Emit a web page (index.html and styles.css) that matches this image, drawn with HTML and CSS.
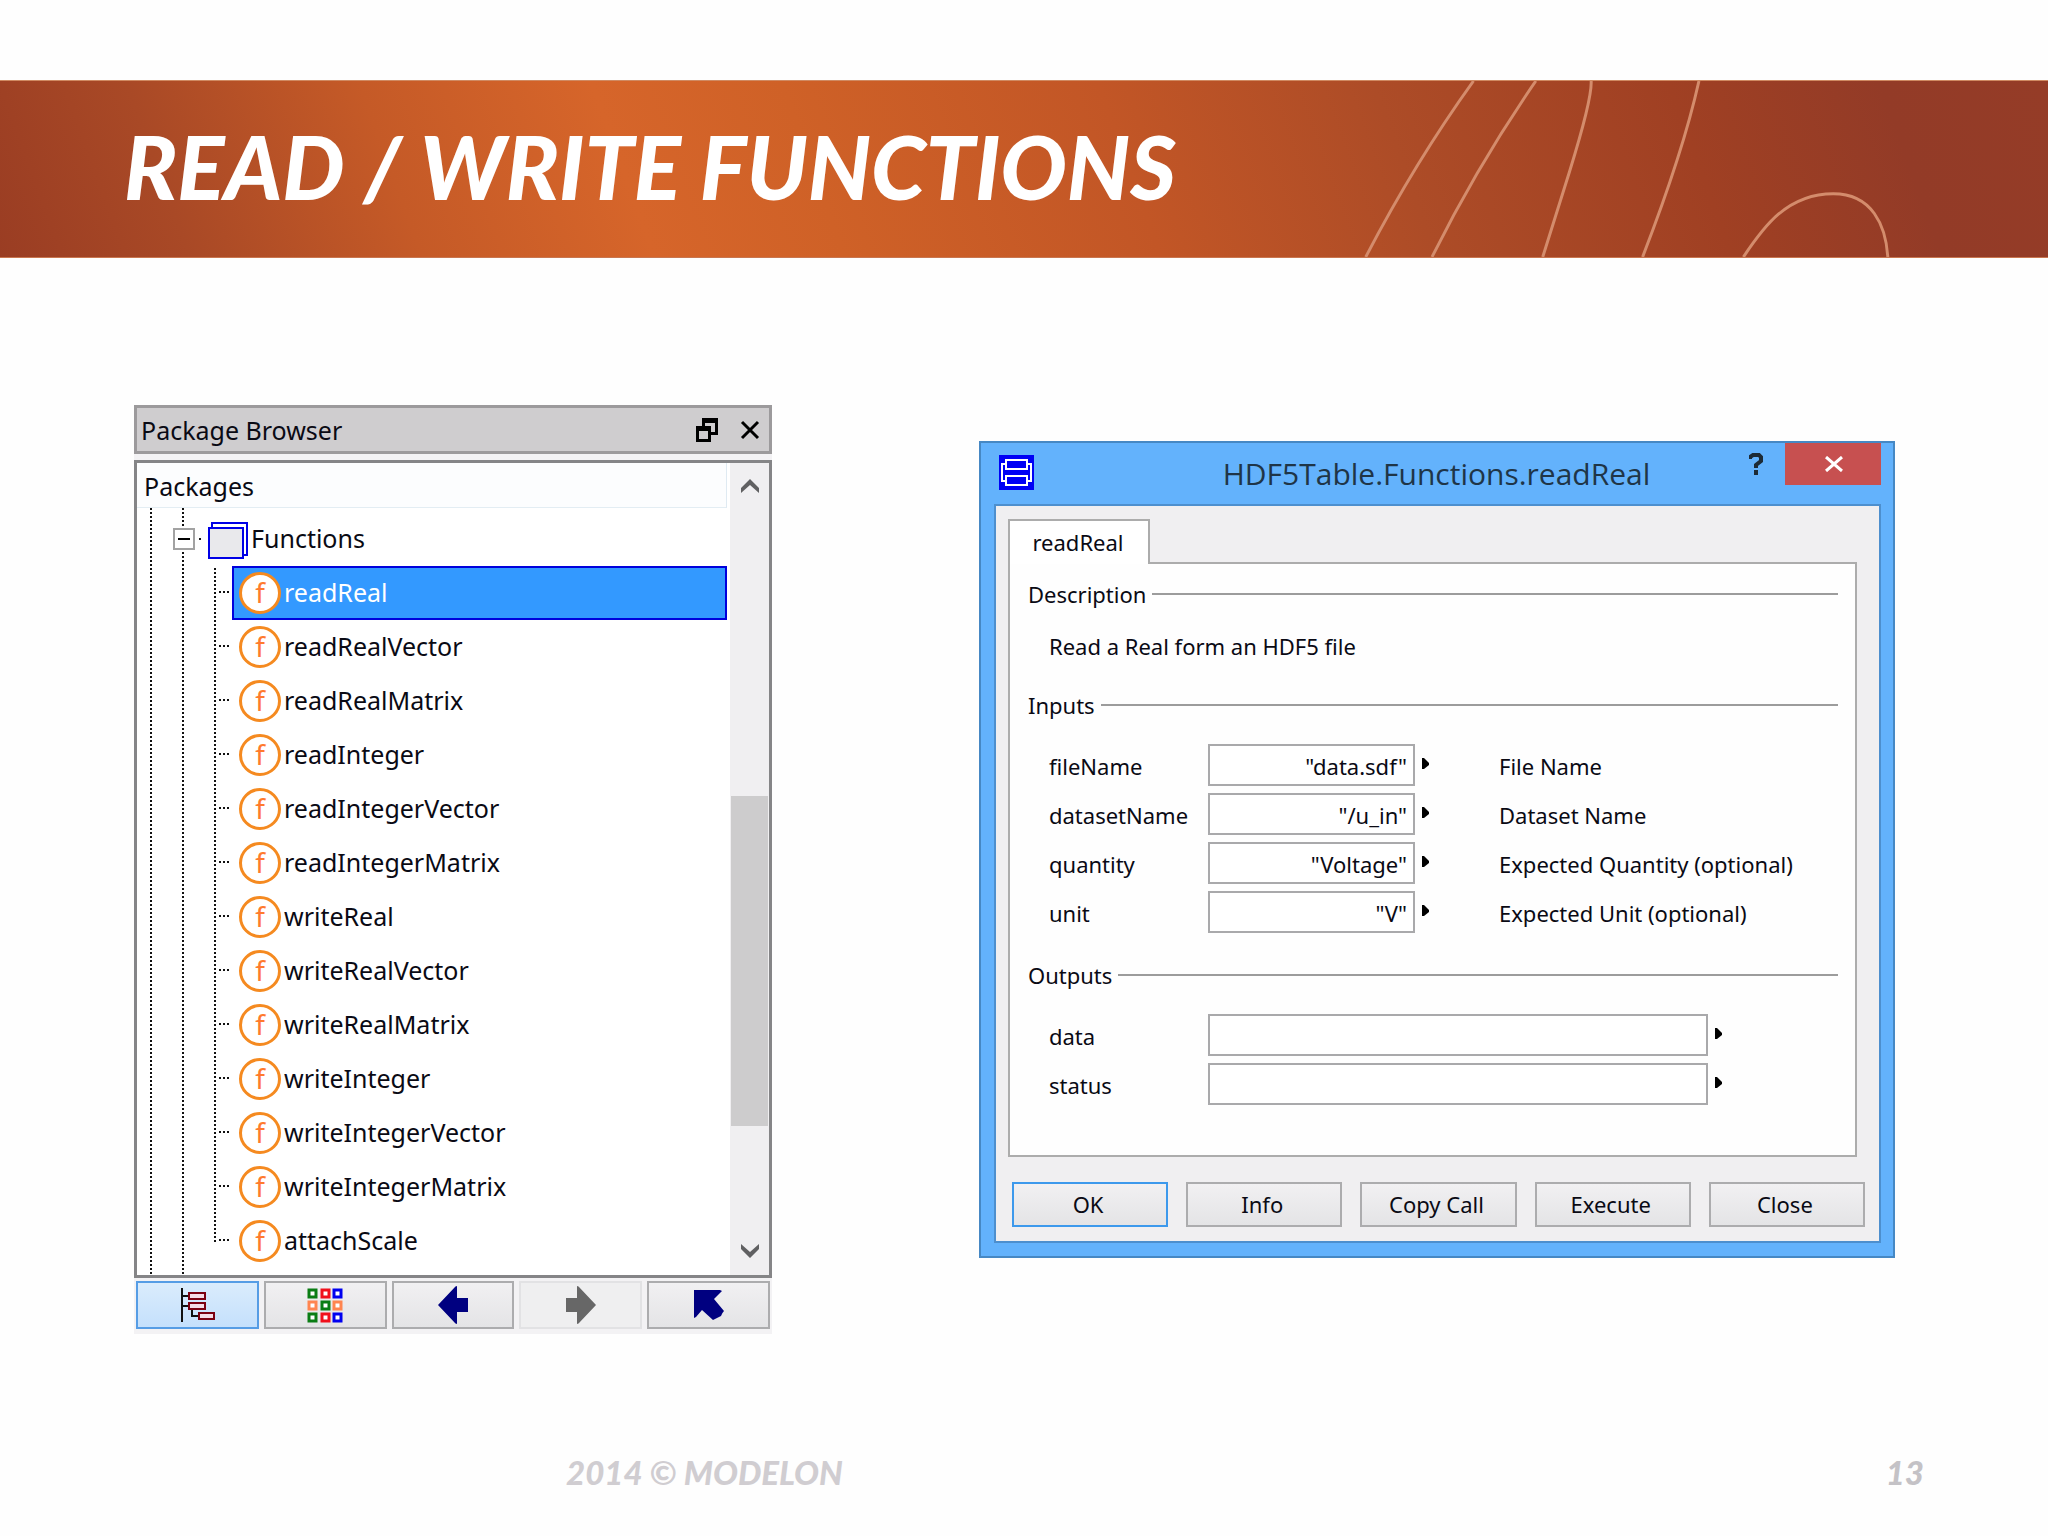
FILE: index.html
```html
<!DOCTYPE html>
<html lang="en">
<head>
<meta charset="utf-8">
<meta name="viewport" content="width=device-width, initial-scale=1">
<title>Read / Write Functions</title>
<link rel="stylesheet" href="styles.css">
</head>
<body>
<svg class="defs" aria-hidden="true">
  <symbol id="more" viewBox="0 0 8 12"><path d="M0 0h2l5 5v2l-5 4H0z"/></symbol>
</svg>
<header class="banner">
  <h1 class="banner-title">READ / WRITE FUNCTIONS</h1>
  <svg class="banner-art" viewBox="0 0 708 178" aria-hidden="true">
    <path d="M131 0 Q72 82 22 178 M194 0 Q136 84 89 178 M250 0 Q251 18 228 92 L201 178 M359 0 Q343 72 302 178 M404 178 C424 148 448 114 495 114 C534 114 548 146 550 178"/>
  </svg>
</header>
<main class="content">
  <section class="browser">
    <div class="browser-head">
      <h2 class="browser-title">Package Browser</h2>
      <button class="glyph" aria-label="Float"><svg width="22" height="24" viewBox="0 0 22 24"><path fill="#000" fill-rule="evenodd" d="M6 0h16v17h-7v7H0V8h6zM9 5v3h6v6h4V5zM3 13v8h9v-8z"/></svg></button>
      <button class="glyph" aria-label="Close panel"><svg width="20" height="20" viewBox="0 0 20 20"><path d="M2 2l16 16M18 2L2 18" stroke="#000" stroke-width="3"/></svg></button>
    </div>
    <div class="tree-box">
      <div class="tree">
        <div class="tree-head">Packages</div>
        <div class="tree-body">
          <div class="folder">
            <button class="toggle" aria-label="Collapse"></button><span class="dot"></span>
            <svg class="folder-icon" width="42" height="38" viewBox="0 0 42 38"><path d="M5 1h35v32h-5V6H5z" fill="#fff" stroke="#0000e6" stroke-width="2"/><path d="M2 6h34v30H2z" fill="#e9e9ec" stroke="#0000e6" stroke-width="2"/></svg>
            <span>Functions</span>
          </div>
          <ul class="leaves">
            <li><button class="leaf selected"><span class="fn">f</span><span>readReal</span></button></li>
            <li><button class="leaf"><span class="fn">f</span><span>readRealVector</span></button></li>
            <li><button class="leaf"><span class="fn">f</span><span>readRealMatrix</span></button></li>
            <li><button class="leaf"><span class="fn">f</span><span>readInteger</span></button></li>
            <li><button class="leaf"><span class="fn">f</span><span>readIntegerVector</span></button></li>
            <li><button class="leaf"><span class="fn">f</span><span>readIntegerMatrix</span></button></li>
            <li><button class="leaf"><span class="fn">f</span><span>writeReal</span></button></li>
            <li><button class="leaf"><span class="fn">f</span><span>writeRealVector</span></button></li>
            <li><button class="leaf"><span class="fn">f</span><span>writeRealMatrix</span></button></li>
            <li><button class="leaf"><span class="fn">f</span><span>writeInteger</span></button></li>
            <li><button class="leaf"><span class="fn">f</span><span>writeIntegerVector</span></button></li>
            <li><button class="leaf"><span class="fn">f</span><span>writeIntegerMatrix</span></button></li>
            <li><button class="leaf"><span class="fn">f</span><span>attachScale</span></button></li>
          </ul>
        </div>
      </div>
      <div class="scroll">
        <button class="scroll-end" aria-label="Scroll up"><svg width="18" height="14" viewBox="0 0 18 14"><path d="M0 9l9-9 9 9v5L9 6l-9 8z" fill="#606062"/></svg></button>
        <div class="thumb"></div>
        <button class="scroll-end" aria-label="Scroll down"><svg width="18" height="14" viewBox="0 0 18 14"><path d="M0 5l9 9 9-9V0L9 8 0 0z" fill="#606062"/></svg></button>
      </div>
    </div>
    <div class="tools">
      <button class="tool active" aria-label="Tree view"><svg width="36" height="36" viewBox="0 0 36 36"><g fill="none" stroke="#111" stroke-width="2"><path d="M3 1v34M3 9h7M3 19h7M13 22v7h7"/></g><g fill="#f5dbe5" stroke="#7b0010" stroke-width="2"><path d="M10 6h16v6H10zM10 16h16v6H10zM20 26h15v6H20z"/></g></svg></button>
      <button class="tool" aria-label="Icon view"><svg width="36" height="36" viewBox="0 0 36 36"><g fill="#fff" stroke-width="3"><path stroke="#0a7d14" d="M2 3h7v7H2zM15 15h7v7h-7zM2 27h7v7H2z"/><path stroke="#f0101c" d="M15 3h7v7h-7zM15 27h7v7h-7z"/><path stroke="#0000f0" d="M27 3h7v7h-7zM27 27h7v7h-7z"/><path stroke="#ff8550" d="M2 15h7v7H2zM27 15h7v7h-7z"/></g></svg></button>
      <button class="tool" aria-label="Back"><svg width="30" height="38" viewBox="0 0 30 38"><path fill="#000080" d="M0 19L17 1q2-2 2 0v11h11v14H19v11q0 2-2 0z"/></svg></button>
      <button class="tool disabled" aria-label="Forward" disabled><svg width="30" height="38" viewBox="0 0 30 38"><path fill="#676767" d="M30 19L13 1q-2-2-2 0v11H0v14h11v11q0 2 2 0z"/></svg></button>
      <button class="tool" aria-label="Up"><svg width="30" height="30" viewBox="0 0 30 30"><path fill="#000080" d="M0 0h26l2 1-8 8 10 12q-2 2-3 5l-8 4-11-10-6 7-2 1z"/></svg></button>
    </div>
  </section>

  <section class="dialog">
    <div class="dialog-head">
      <svg class="app-icon" width="35" height="35" viewBox="0 0 35 35"><path fill="#0000f5" d="M0 0h35v35H0z"/><path fill="none" stroke="#fff" stroke-width="2" d="M7 5h21v9H7zM7 21h21v9H7zM7 9H3v17h4M28 9h4v17h-4"/></svg>
      <h2 class="dialog-title">HDF5Table.Functions.readReal</h2>
      <button class="help" aria-label="Help"><svg width="14" height="22" viewBox="0 0 14 22"><path d="M1 6V4l3-2h6l2 2v4l-5 4v3M7 17v5" fill="none" stroke="#1d2b36" stroke-width="4"/></svg></button>
      <button class="shut" aria-label="Close window"><svg width="18" height="16" viewBox="0 0 18 16"><path d="M1 1l16 14M17 1L1 15" stroke="#fff" stroke-width="3"/></svg></button>
    </div>
    <div class="dialog-body">
      <div class="tabs"><button class="tab">readReal</button></div>
      <div class="pane">
        <h3 class="group">Description</h3>
        <p class="about">Read a Real form an HDF5 file</p>
        <h3 class="group">Inputs</h3>
        <div class="fields">
          <div class="field"><label for="fileName">fileName</label><input id="fileName" value='"data.sdf"'><svg class="more"><use href="#more"/></svg><span>File Name</span></div>
          <div class="field"><label for="datasetName">datasetName</label><input id="datasetName" value='"/u_in"'><svg class="more"><use href="#more"/></svg><span>Dataset Name</span></div>
          <div class="field"><label for="quantity">quantity</label><input id="quantity" value='"Voltage"'><svg class="more"><use href="#more"/></svg><span>Expected Quantity (optional)</span></div>
          <div class="field"><label for="unit">unit</label><input id="unit" value='"V"'><svg class="more"><use href="#more"/></svg><span>Expected Unit (optional)</span></div>
        </div>
        <h3 class="group">Outputs</h3>
        <div class="fields">
          <div class="field wide"><label for="data">data</label><input id="data"><svg class="more"><use href="#more"/></svg></div>
          <div class="field wide"><label for="status">status</label><input id="status"><svg class="more"><use href="#more"/></svg></div>
        </div>
      </div>
      <div class="actions">
        <button class="action primary">OK</button>
        <button class="action">Info</button>
        <button class="action">Copy Call</button>
        <button class="action">Execute</button>
        <button class="action">Close</button>
      </div>
    </div>
  </section>
</main>
<footer class="foot"><span>2014 © MODELON</span><span class="page-no">13</span></footer>
</body>
</html>
```
FILE: styles.css
```css
* { box-sizing: border-box; }
body {
  margin: 0;
  min-height: 100vh;
  display: flex;
  flex-direction: column;
  padding-top: 80px;
  background: #fefefe;
  color: #0a0a14;
  font: 22px/28px "Noto Sans", "Open Sans", sans-serif;
}
h1, h2, h3, p, ul { margin: 0; padding: 0; font-weight: 400; }
button, input { font: inherit; color: inherit; margin: 0; padding: 0; border: 0; background: none; border-radius: 0; }
svg { display: block; flex: none; }
.defs { position: absolute; width: 0; height: 0; }

.banner {
  display: flex;
  align-items: center;
  justify-content: space-between;
  height: 178px;
  padding-left: 124px;
  border-top: 1px solid #d08a62;
  border-bottom: 1px solid #c9764f;
  background: linear-gradient(70deg, #9a3d23 0%, #a94926 9%, #c55a27 20%, #d6652a 31%, #cf6127 40%, #c25626 55%, #ad4c27 68%, #a04023 82%, #933b27 92%, #953c27 100%);
}
.banner-title {
  padding-bottom: 6px;
  color: #fff;
  font: italic 900 88px/96px Lato, sans-serif;
  white-space: nowrap;
}
.banner-art { width: 708px; height: 176px; }
.banner-art path { fill: none; stroke: #d48c6c; stroke-width: 3; }

.content {
  display: grid;
  grid-template-columns: 638fr 916fr;
  column-gap: 207px;
  align-items: start;
  padding: 147px 153px 0 134px;
}

.browser { display: flex; flex-direction: column; padding-bottom: 5px; background: #f3f2f4; font-size: 25px; }
.browser-head {
  display: flex;
  align-items: center;
  gap: 22px;
  height: 49px;
  padding: 0 9px 0 4px;
  border: 3px solid #9c9a9c;
  background: #cfcdcf;
}
.browser-title { flex: 1; font-size: 25px; }
.glyph { display: flex; }
.tree-box {
  display: grid;
  grid-template-columns: 1fr 39px;
  margin-top: 6px;
  border: 3px solid #858587;
  background: #fff;
}
.tree { padding-right: 3px; }
.tree-head {
  height: 45px;
  padding: 9px 7px 0;
  border-right: 1px solid #dfeaf2;
  border-bottom: 1px solid #e3edf3;
  background: #fcfdfe;
}
.tree-body {
  padding: 4px 0 7px;
  background:
    repeating-linear-gradient(#111 0 2px, transparent 2px 4px) 13px 0 / 2px 100% no-repeat,
    repeating-linear-gradient(#111 0 2px, transparent 2px 4px) 45px 0 / 2px 100% no-repeat;
}
.folder { display: flex; align-items: center; height: 54px; padding-left: 36px; }
.folder > span:last-child, .leaf > span:last-child { padding-bottom: 2px; }
.toggle {
  width: 22px;
  height: 22px;
  border: 2px solid #a2a2a2;
  background: linear-gradient(#000, #000) center / 12px 2px no-repeat #fff;
}
.dot { width: 2px; height: 2px; margin: 0 6px 0 4px; background: #111; }
.folder-icon { margin: 4px 2px 0 0; }
.leaves {
  list-style: none;
  background: repeating-linear-gradient(#111 0 2px, transparent 2px 4px) 77px 2px / 2px calc(100% - 28px) no-repeat;
}
.leaves li {
  display: flex;
  padding-left: 95px;
  background: repeating-linear-gradient(90deg, #111 0 2px, transparent 2px 4px) 82px 25px / 12px 2px no-repeat;
}
.leaf {
  flex: 1;
  display: flex;
  align-items: center;
  gap: 3px;
  height: 54px;
  padding-left: 5px;
  border: 2px solid transparent;
}
.leaf.selected { border-color: #0000dc; background: #3399ff; color: #fff; }
.fn {
  width: 42px;
  height: 42px;
  border: 3px solid #f58a20;
  border-radius: 50%;
  background: #fff;
  color: #ff7a2e;
  font-size: 28px;
  line-height: 34px;
  text-align: center;
}

.scroll { display: grid; grid-template-rows: 50px 281fr 327fr 104fr 44px; background: #f0eff1; }
.scroll-end { display: grid; place-items: center; padding-bottom: 4px; }
.scroll-end:last-child { grid-row: 5; }
.thumb { grid-row: 3; margin: 0 1px; background: #cdcccd; }

.tools { display: grid; grid-template-columns: repeat(5, 1fr); gap: 5px; padding: 3px 2px 0; }
.tool {
  display: grid;
  place-items: center;
  height: 48px;
  border: 2px solid #acacae;
  background: linear-gradient(#f1f0f2, #e4e4e6);
}
.tool.active { border-color: #569de5; background: linear-gradient(#daecfc, #c4e0fc); }
.tool.disabled { border-color: #e2e2e4; background: #efeff0; }

.dialog { margin-top: 36px; padding: 0 12px 13px 13px; border: 2px solid #4688c4; background: #63b2fc; }
.dialog-head { display: flex; height: 61px; align-items: flex-start; }
.app-icon { margin: 12px 0 0 5px; }
.dialog-title { flex: 1; padding: 10px 0 0 90px; text-align: center; font: 30px/42px "Open Sans", "Noto Sans", sans-serif; color: #1f3547; }
.help { display: flex; margin: 10px 22px 0 0; }
.shut { display: grid; place-items: center; width: 96px; height: 42px; padding-left: 2px; background: #c75050; }
.dialog-body { padding: 13px 14px 14px 12px; border: 2px solid #4d8fce; background: #f0eff1; }
.tabs { display: flex; }
.tab {
  width: 142px;
  height: 45px;
  margin-bottom: -2px;
  padding: 0 2px 2px 0;
  border: 2px solid #acacac;
  border-bottom: 0;
  background: #fff;
  position: relative;
}
.pane { margin-right: 8px; padding: 16px 17px 50px 18px; border: 2px solid #acacac; background: #fefefe; }
.group { display: flex; align-items: center; gap: 6px; font-size: 22px; }
.group::after { content: ""; flex: 1; height: 2px; background: #9c9c9c; }
.about { padding: 24px 21px 31px; }
.fields { display: grid; gap: 7px; padding: 25px 0 28px 21px; }
.fields:last-child { padding-bottom: 0; }
.field { display: grid; grid-template-columns: 159px 207px 84px 1fr; align-items: center; }
.field.wide { grid-template-columns: 159px 500px 1fr; }
.field label, .field span { padding-top: 2px; }
.field input { width: 100%; height: 42px; padding: 2px 6px 0; border: 2px solid #a9a9ab; background: #fff; text-align: right; }
.more { width: 8px; height: 12px; margin: 0 0 2px 7px; }
.actions { display: grid; grid-template-columns: repeat(5, 1fr); gap: 18px; margin-top: 25px; padding-left: 4px; }
.action { height: 45px; padding: 0 4px 2px 0; border: 2px solid #acacae; background: linear-gradient(#f1f0f2, #e4e4e6); }
.action.primary { border-color: #3d99ec; }

.foot {
  display: flex;
  justify-content: space-between;
  margin-top: auto;
  padding: 0 124px 44px 566px;
  color: #d0cdd1;
  font: italic 900 33px/40px Lato, sans-serif;
}
.page-no { color: #c4c2c6; }
```
